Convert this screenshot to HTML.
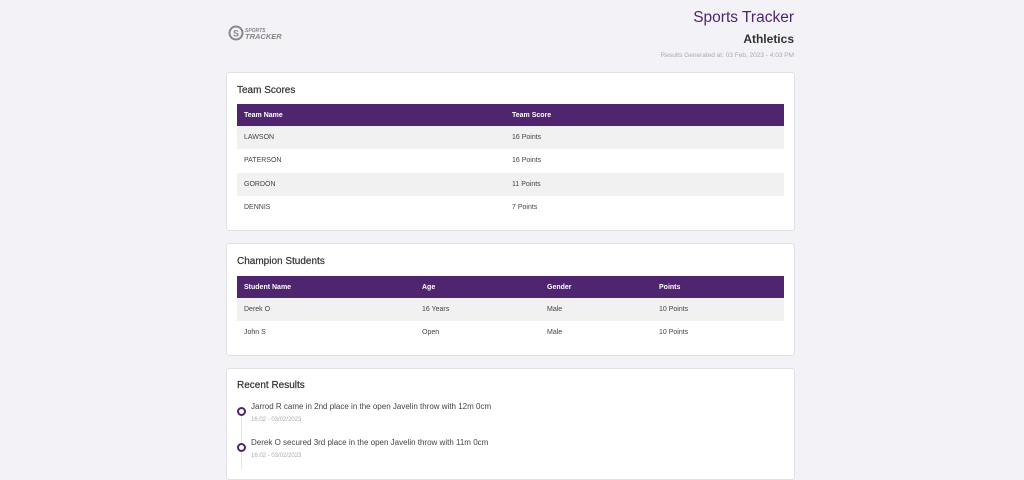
<!DOCTYPE html>
<html><head><style>
body{margin:0;background:#f3f2f7;font-family:"Liberation Sans",sans-serif;color:#333;width:1024px;height:463px;overflow:hidden;position:relative}
.abs{position:absolute}
.card{position:absolute;left:226px;width:567px;background:#fff;border:1px solid #e2e2e6;border-radius:3px}
.card h3{position:absolute;left:10px;margin:0;font-size:10px;font-weight:normal;color:#333;-webkit-text-stroke:0.2px #333}
table{position:absolute;left:10px;width:547px;border-collapse:collapse;font-size:7px}
th{background:#4f2570;color:#fff;text-align:left;height:22px;padding:0 0 0 7px;font-weight:bold}
td{height:23.3px;padding:0 0 0 7px;color:#444}
tr.g td{background:#f1f1f1}
</style></head><body>
<div class="abs" style="left:228px;top:24px;">
<svg width="58" height="18" viewBox="0 0 58 18"><circle cx="8" cy="9" r="6.5" fill="none" stroke="#888" stroke-width="2"/><text x="5" y="12.5" font-size="9" font-weight="bold" fill="#888" font-family="Liberation Sans">S</text><text x="17" y="8" font-size="5" font-style="italic" font-weight="bold" fill="#888" font-family="Liberation Sans">SPORTS</text><text x="17" y="15" font-size="7.5" font-style="italic" font-weight="bold" fill="#888" font-family="Liberation Sans">TRACKER</text></svg>
</div>
<div class="abs" style="right:230px;top:9px;font-size:15.5px;color:#4f2570;">Sports Tracker</div>
<div class="abs" style="right:230px;top:32px;font-size:12px;font-weight:bold;color:#333;">Athletics</div>
<div class="abs" style="right:230px;top:52px;font-size:6.5px;color:#aaa;">Results Generated at: 03 Feb, 2023 - 4:03 PM</div>

<div class="card" style="top:72px;height:157px">
<h3 style="top:12px">Team Scores</h3>
<table style="top:31px"><tr><th style="width:261px">Team Name</th><th>Team Score</th></tr>
<tr class="g"><td>LAWSON</td><td>16 Points</td></tr>
<tr><td>PATERSON</td><td>16 Points</td></tr>
<tr class="g"><td>GORDON</td><td>11 Points</td></tr>
<tr><td>DENNIS</td><td>7 Points</td></tr></table>
</div>

<div class="card" style="top:243px;height:111px">
<h3 style="top:12px">Champion Students</h3>
<table style="top:32px"><tr><th style="width:171px">Student Name</th><th style="width:118px">Age</th><th style="width:105px">Gender</th><th>Points</th></tr>
<tr class="g"><td>Derek O</td><td>16 Years</td><td>Male</td><td>10 Points</td></tr>
<tr><td>John S</td><td>Open</td><td>Male</td><td>10 Points</td></tr></table>
</div>

<div class="card" style="top:368px;height:110px">
<h3 style="top:11px">Recent Results</h3>
<div class="abs" style="left:14px;top:40px;width:1px;height:60px;background:#e5e5e5"></div>
<div class="abs" style="left:10px;top:38px;width:5px;height:5px;border:2px solid #4f2570;border-radius:50%;background:#fff"></div>
<div class="abs" style="left:24px;top:33px;font-size:8px;color:#444">Jarrod R came in 2nd place in the open Javelin throw with 12m 0cm</div>
<div class="abs" style="left:24px;top:48px;font-size:6px;color:#aaa">16:02 - 03/02/2023</div>
<div class="abs" style="left:10px;top:74px;width:5px;height:5px;border:2px solid #4f2570;border-radius:50%;background:#fff"></div>
<div class="abs" style="left:24px;top:69px;font-size:8px;color:#444">Derek O secured 3rd place in the open Javelin throw with 11m 0cm</div>
<div class="abs" style="left:24px;top:84px;font-size:6px;color:#aaa">16:02 - 03/02/2023</div>
</div>
</body></html>
